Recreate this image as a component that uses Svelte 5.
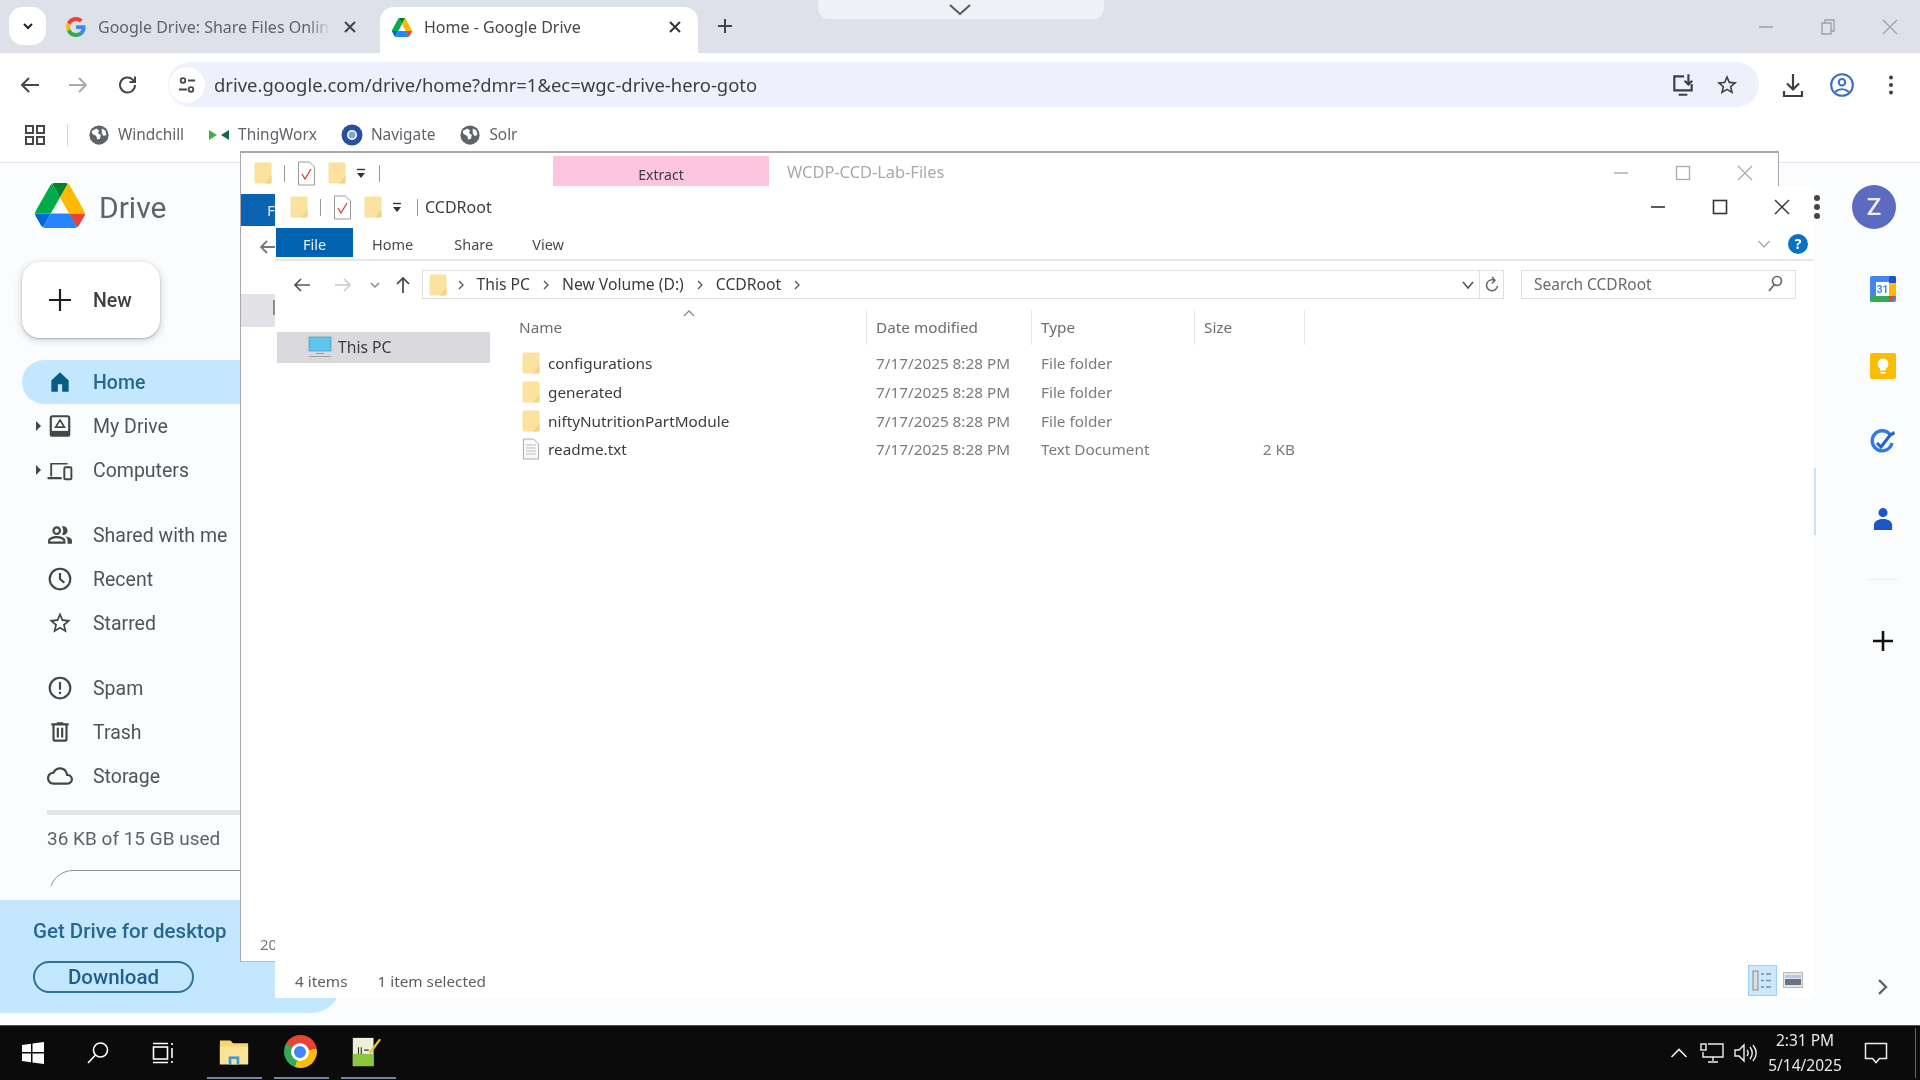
<script>
	const navTop = [
		{ label: 'Home', icon: 'home', active: true },
		{ label: 'My Drive', icon: 'drive', caret: true },
		{ label: 'Computers', icon: 'computers', caret: true }
	];
	const navMid = [
		{ label: 'Shared with me', icon: 'shared' },
		{ label: 'Recent', icon: 'recent' },
		{ label: 'Starred', icon: 'starred' }
	];
	const navLow = [
		{ label: 'Spam', icon: 'spam' },
		{ label: 'Trash', icon: 'trash' },
		{ label: 'Storage', icon: 'storage' }
	];
	const files = [
		{ name: 'configurations', type: 'File folder', size: '', folder: true },
		{ name: 'generated', type: 'File folder', size: '', folder: true },
		{ name: 'niftyNutritionPartModule', type: 'File folder', size: '', folder: true },
		{ name: 'readme.txt', type: 'Text Document', size: '2 KB', folder: false }
	];
	const crumbs = ['This PC', 'New Volume (D:)', 'CCDRoot'];
</script>

{#snippet driveLogo(w, h)}
	<svg width={w} height={h} viewBox="0 0 87.3 78" preserveAspectRatio="none">
		<path d="m6.6 66.85 3.85 6.65c.8 1.4 1.95 2.5 3.3 3.3l13.75-23.8h-27.5c0 1.55.4 3.1 1.2 4.5z" fill="#0066da" />
		<path d="m43.65 25-13.75-23.8c-1.35.8-2.5 1.9-3.3 3.3l-25.4 44a9.06 9.06 0 0 0 -1.2 4.5h27.5z" fill="#00ac47" />
		<path d="m73.55 76.8c1.35-.8 2.5-1.9 3.3-3.3l1.6-2.75 7.65-13.25c.8-1.4 1.2-2.95 1.2-4.5h-27.502l5.852 11.5z" fill="#ea4335" />
		<path d="m43.65 25 13.75-23.8c-1.35-.8-2.9-1.2-4.5-1.2h-18.5c-1.6 0-3.15.45-4.5 1.2z" fill="#00832d" />
		<path d="m59.8 53h-32.3l-13.75 23.8c1.35.8 2.9 1.2 4.5 1.2h50.8c1.6 0 3.15-.45 4.5-1.2z" fill="#2684fc" />
		<path d="m73.4 26.5-12.7-22c-.8-1.4-1.95-2.5-3.3-3.3l-13.75 23.8 16.15 28h27.45c0-1.55-.4-3.1-1.2-4.5z" fill="#ffba00" />
	</svg>
{/snippet}

{#snippet globe()}
	<svg width="22" height="22" viewBox="0 0 24 24">
		<circle cx="12" cy="12" r="10.5" fill="#5f6368" />
		<path d="M4 8l5-3 3 2-1 3 3 2-1 4-3 1-1-4-4-2zM15 5l4 2 1 5-3 1-2-3z" fill="#fff" />
	</svg>
{/snippet}

{#snippet folder(w, h)}
	<svg class="folder" width={w} height={h} viewBox="0 0 18 22">
		<rect x=".5" y=".5" width="17" height="21" rx="1.5" fill="#fce29f" />
		<path d="M11 21.500l6.500-8v6.500a1.500 1.500 0 0 1-1.500 1.500z" fill="#f6d384" />
	</svg>
{/snippet}

{#snippet checkDoc()}
	<svg width="19" height="25" viewBox="0 0 19 25">
		<path d="M1.5 1h11l5 5v18h-16z" fill="#fff" stroke="#9a9a9a" />
		<path d="M5 13l3 5 6-10" fill="none" stroke="#d9473f" stroke-width="1.4" />
	</svg>
{/snippet}

{#snippet qat(dark)}
	<div class="qat">
		{@render folder(18, 22)}
		<span class="qat-sep"></span>
		{@render checkDoc()}
		{@render folder(18, 22)}
		<svg class="qat-drop" width="10" height="12" viewBox="0 0 10 12">
			<path d="M1 2.5h8" stroke="#333" stroke-width="1.4" />
			<path d="M1 6h8l-4 5z" fill="#333" />
		</svg>
		<span class="qat-sep last" class:dark></span>
	</div>
{/snippet}

{#snippet navIcon(name)}
	<svg width="26" height="26" viewBox="0 0 24 24" fill="#444746">
		{#if name === 'home'}
			<path d="M4 21V10.5L12 3l8 7.5V21h-6v-7h-4v7z" fill="#0b5a85" />
		{:else if name === 'drive'}
			<rect x="3.5" y="3" width="17" height="18" rx="1.5" fill="none" stroke="#444746" stroke-width="2" />
			<path d="M3.5 16.5h17v4.5h-17z" />
			<path d="M12 6.5l4 6.5H8z" fill="none" stroke="#444746" stroke-width="1.6" />
		{:else if name === 'computers'}
			<path d="M3 5.5h16V7H4.7v11H3zM.5 18.5h13V20.500H.5z" />
			<rect x="16" y="9.500" width="6.500" height="11" rx="1" fill="none" stroke="#444746" stroke-width="1.800" />
		{:else if name === 'shared'}
			<path d="M16.67 13.13C18.04 14.06 19 15.32 19 17v3h4v-3c0-2.18-3.57-3.47-6.33-3.87zM15 12c2.21 0 4-1.79 4-4s-1.79-4-4-4c-.47 0-.91.1-1.33.24C14.5 5.27 15 6.58 15 8s-.5 2.73-1.33 3.76c.42.14.86.24 1.33.24zM9 12c2.21 0 4-1.79 4-4s-1.79-4-4-4-4 1.79-4 4 1.79 4 4 4zm0-6c1.1 0 2 .9 2 2s-.9 2-2 2-2-.9-2-2 .9-2 2-2zM9 13c-2.67 0-8 1.34-8 4v3h16v-3c0-2.66-5.33-4-8-4zm6 5H3v-.99C3.2 16.29 6.3 15 9 15s5.8 1.29 6 2z" />
		{:else if name === 'recent'}
			<circle cx="12" cy="12" r="9.500" fill="none" stroke="#444746" stroke-width="2" />
			<path d="M12 6.500V12l4 3.500" fill="none" stroke="#444746" stroke-width="2" />
		{:else if name === 'starred'}
			<path d="M22 9.24l-7.19-.62L12 2 9.19 8.63 2 9.24l5.46 4.73L5.82 21 12 17.27 18.18 21l-1.63-7.03L22 9.24zM12 15.4l-3.76 2.27 1-4.28-3.32-2.88 4.38-.38L12 6.1l1.71 4.04 4.38.38-3.32 2.88 1 4.28L12 15.4z" />
		{:else if name === 'spam'}
			<circle cx="12" cy="12" r="9.500" fill="none" stroke="#444746" stroke-width="2" />
			<path d="M11 6.500h2v7h-2zM11 15.500h2v2h-2z" />
		{:else if name === 'trash'}
			<path d="M15 4V3H9v1H4v2h1v13c0 1.100.9 2 2 2h10c1.100 0 2-.9 2-2V6h1V4h-5zm2 15H7V6h10v13zM9 8h2v9H9zm4 0h2v9h-2z" />
		{:else}
			<path d="M19.35 10.040C18.670 6.590 15.640 4 12 4 9.110 4 6.600 5.640 5.350 8.040 2.340 8.360 0 10.910 0 14c0 3.310 2.690 6 6 6h13c2.760 0 5-2.240 5-5 0-2.640-2.050-4.780-4.650-4.960zM19 18H6c-2.210 0-4-1.790-4-4 0-2.050 1.530-3.760 3.560-3.970l1.070-.11.5-.95C8.080 7.140 9.940 6 12 6c2.620 0 4.880 1.860 5.390 4.430l.3 1.500 1.530.11c1.560.1 2.780 1.410 2.780 2.960 0 1.650-1.350 3-3 3z" />
		{/if}
	</svg>
{/snippet}

{#snippet navRow(item)}
	<div class="nav-row" class:active={item.active}>
		{#if item.caret}<span class="caret"></span>{/if}
		<span class="nav-icon">{@render navIcon(item.icon)}</span>
		<span>{item.label}</span>
	</div>
{/snippet}

<div class="screen">
	<div class="tabbar">
		<div class="tab-list">
			<svg width="14" height="14" viewBox="0 0 14 14"><path d="M3 5l4 4 4-4" fill="none" stroke="#1f1f1f" stroke-width="2" /></svg>
		</div>
		<div class="tab">
			<svg width="20" height="20" viewBox="0 0 48 48">
				<path fill="#EA4335" d="M24 9.5c3.54 0 6.71 1.22 9.21 3.6l6.85-6.85C35.9 2.38 30.47 0 24 0 14.62 0 6.51 5.38 2.56 13.22l7.98 6.19C12.43 13.72 17.74 9.5 24 9.5z" />
				<path fill="#4285F4" d="M46.98 24.55c0-1.57-.15-3.09-.38-4.55H24v9.02h12.94c-.58 2.96-2.26 5.48-4.78 7.18l7.73 6c4.51-4.18 7.09-10.36 7.09-17.65z" />
				<path fill="#FBBC05" d="M10.53 28.59c-.48-1.45-.76-2.99-.76-4.59s.27-3.14.76-4.59l-7.98-6.19C.92 16.46 0 20.12 0 24c0 3.88.92 7.54 2.56 10.78l7.97-6.19z" />
				<path fill="#34A853" d="M24 48c6.48 0 11.93-2.13 15.89-5.81l-7.73-6c-2.15 1.45-4.92 2.3-8.16 2.3-6.26 0-11.57-4.22-13.47-9.91l-7.98 6.19C6.51 42.62 14.62 48 24 48z" />
			</svg>
			<span class="tab-title">Google Drive: Share Files Online</span>
			<svg class="tab-x" width="14" height="14" viewBox="0 0 14 14"><path d="M2 2l10 10M12 2L2 12" stroke="#444" stroke-width="2" /></svg>
		</div>
		<div class="tab current">
			{@render driveLogo(20, 19)}
			<span class="tab-title">Home - Google Drive</span>
			<svg class="tab-x" width="14" height="14" viewBox="0 0 14 14"><path d="M2 2l10 10M12 2L2 12" stroke="#333" stroke-width="2" /></svg>
		</div>
		<svg class="new-tab" width="18" height="18" viewBox="0 0 18 18"><path d="M9 2v14M2 9h14" stroke="#444" stroke-width="2" /></svg>
		<div class="win-btns faint">
			<svg width="16" height="16" viewBox="0 0 16 16"><path d="M1 8h14" stroke="#9aa0a6" stroke-width="1.500" /></svg>
			<svg width="16" height="16" viewBox="0 0 16 16"><path d="M2 4h9v11H2zM5 4V1h9v11h-3" fill="none" stroke="#9aa0a6" stroke-width="1.300" /></svg>
			<svg width="16" height="16" viewBox="0 0 16 16"><path d="M1 1l14 14M15 1L1 15" stroke="#9aa0a6" stroke-width="1.300" /></svg>
		</div>
	</div>

	<div class="toolbar">
		<svg class="tool back-ic" width="24" height="24" viewBox="0 0 24 24"><path d="M21 12H4M11 5l-7 7 7 7" fill="none" stroke="#444746" stroke-width="2" /></svg>
		<svg class="tool fwd-ic" width="24" height="24" viewBox="0 0 24 24"><path d="M3 12h17M13 5l7 7-7 7" fill="none" stroke="#a8abb0" stroke-width="2" /></svg>
		<svg class="tool reload-ic" width="24" height="24" viewBox="0 0 24 24"><path d="M19 12a7.500 7.500 0 1 1-2.300-5.400L19 9M19 3.500V9h-5.500" fill="none" stroke="#444746" stroke-width="2" /></svg>
		<div class="omnibox">
			<span class="site-info">
				<svg width="20" height="20" viewBox="0 0 20 20" fill="none" stroke="#444746" stroke-width="1.800">
					<circle cx="6" cy="5.500" r="2.300" /><path d="M11 5.500h7M2 14.500h8" /><circle cx="14" cy="14.500" r="2.300" />
				</svg>
			</span>
			<span class="url">drive.google.com/drive/home?dmr=1&amp;ec=wgc-drive-hero-goto</span>
			<svg class="omni-install" width="26" height="26" viewBox="0 0 24 24" fill="none" stroke="#3c4043" stroke-width="2">
				<path d="M13 4H4v13h16v-6M8 21h8" /><path d="M17 2v9M13.500 8l3.500 3.500L20.500 8" />
			</svg>
			<svg class="omni-star" width="24" height="24" viewBox="0 0 24 24" fill="#3c4043">
				<path d="M22 9.240l-7.190-.62L12 2 9.190 8.630 2 9.240l5.460 4.730L5.820 21 12 17.270 18.180 21l-1.630-7.030L22 9.240zM12 15.400l-3.760 2.270 1-4.280-3.320-2.880 4.380-.38L12 6.100l1.710 4.040 4.380.38-3.320 2.880 1 4.280L12 15.400z" />
			</svg>
		</div>
		<svg class="tool dl-ic" width="24" height="26" viewBox="0 0 24 26" fill="none" stroke="#3c4043" stroke-width="2.200"><path d="M12 2v15M6 11.500l6 6 6-6M3 19v5h18v-5" /></svg>
		<svg class="tool prof-ic" width="26" height="26" viewBox="0 0 24 24" fill="none" stroke="#3a6fc4" stroke-width="1.900"><circle cx="12" cy="12" r="10" /><circle cx="12" cy="9.500" r="3" /><path d="M5.500 18.500c4-3.500 9-3.500 13 0" /></svg>
		<svg class="tool dots-ic" width="24" height="24" viewBox="0 0 24 24" fill="#3c4043"><circle cx="12" cy="4.500" r="2" /><circle cx="12" cy="12" r="2" /><circle cx="12" cy="19.500" r="2" /></svg>
	</div>

	<div class="bookmarks">
		<svg class="apps" width="20" height="20" viewBox="0 0 20 20" fill="none" stroke="#444746" stroke-width="2"><rect x="1" y="1" width="7" height="7" /><rect x="12" y="1" width="7" height="7" /><rect x="1" y="12" width="7" height="7" /><rect x="12" y="12" width="7" height="7" /></svg>
		<span class="bm-sep"></span>
		<span class="bm">{@render globe()}<span>Windchill</span></span>
		<span class="bm">
			<svg width="22" height="14" viewBox="0 0 22 14"><path d="M1 2l8 5-8 5z" fill="#3fae49" /><path d="M21 2l-8 5 8 5z" fill="#17654d" /></svg>
			<span>ThingWorx</span>
		</span>
		<span class="bm">
			<svg width="22" height="22" viewBox="0 0 22 22"><circle cx="11" cy="11" r="10.500" fill="#2a4f9e" /><circle cx="11" cy="11" r="5" fill="#fff" /><circle cx="11" cy="11" r="3.500" fill="#7ba7dc" /></svg>
			<span>Navigate</span>
		</span>
		<span class="bm">{@render globe()}<span>Solr</span></span>
	</div>

	<div class="drive">
		<aside class="sidebar">
			<div class="logo">
				{@render driveLogo(50, 45)}
				<span>Drive</span>
			</div>
			<div class="new-btn">
				<svg width="24" height="24" viewBox="0 0 24 24"><path d="M12 1v22M1 12h22" stroke="#1f1f1f" stroke-width="2.200" /></svg>
				<span>New</span>
			</div>
			<nav class="nav first">{#each navTop as item}{@render navRow(item)}{/each}</nav>
			<nav class="nav">{#each navMid as item}{@render navRow(item)}{/each}</nav>
			<nav class="nav">{#each navLow as item}{@render navRow(item)}{/each}</nav>
			<div class="quota-bar"></div>
			<div class="quota">36 KB of 15 GB used</div>
			<div class="more"><div class="more-btn"></div></div>
			<div class="promo">
				<div class="promo-title">Get Drive for desktop</div>
				<div class="promo-btn">Download</div>
			</div>
		</aside>

		<div class="drive-right">
			<div class="drive-head">
				<svg width="10" height="26" viewBox="0 0 10 26" fill="#444746"><circle cx="5" cy="4" r="3" /><circle cx="5" cy="13" r="3" /><circle cx="5" cy="22" r="3" /></svg>
				<div class="avatar">Z</div>
			</div>
			<div class="rail">
				<svg class="slot" width="28" height="28" viewBox="0 0 28 28">
					<rect x="1" y="1" width="26" height="26" rx="2" fill="#4285f4" />
					<path d="M20 1h5a2 2 0 0 1 2 2v5h-7z" fill="#1a56c4" />
					<rect x="20" y="8" width="7" height="13" fill="#fbbc04" />
					<path d="M1 21h19v6H3a2 2 0 0 1-2-2z" fill="#34a853" />
					<path d="M20 21h7l-7 6z" fill="#ea4335" />
					<rect x="7" y="7" width="13" height="14" fill="#fff" />
					<text x="13.500" y="18" class="cal-num">31</text>
				</svg>
				<div class="slot keep">
					<svg width="28" height="28" viewBox="0 0 28 28">
						<rect x="1" y="1" width="26" height="26" rx="2" fill="#fbbc04" />
						<path d="M14 6.500a5.500 5.500 0 0 0-3 10v2h6v-2a5.500 5.500 0 0 0-3-10zM11.500 20h5v1.500h-5z" fill="#fff" />
					</svg>
				</div>
				<svg class="slot" width="28" height="28" viewBox="0 0 28 28" fill="none">
					<path d="M21 6.500A10 10 0 1 0 23 15" stroke="#2f7be6" stroke-width="3.400" />
					<path d="M8 15l4 4 10-13" stroke="#1f62d0" stroke-width="3" />
					<path d="M20 6l5-3 1 3-3 2z" fill="#1f62d0" />
				</svg>
				<svg class="slot" width="20" height="24" viewBox="0 0 22 26" fill="#1a56c4">
					<circle cx="11" cy="6" r="5" /><path d="M1 25v-5c0-4 4-7 10-7s10 3 10 7v5z" />
				</svg>
				<div class="rail-sep"></div>
				<svg class="rail-add" width="22" height="22" viewBox="0 0 22 22"><path d="M11 1v20M1 11h20" stroke="#111" stroke-width="2.600" /></svg>
				<svg class="rail-more" width="14" height="20" viewBox="0 0 14 20"><path d="M3 3l7 7-7 7" fill="none" stroke="#5f6368" stroke-width="2.400" /></svg>
			</div>
		</div>
	</div>

	<div class="taskbar">
		<span class="task-cell wide">
			<svg width="24" height="24" viewBox="0 0 24 24" fill="#fff"><path d="M1 4l9-1.300V11H1zM11.500 2.500L23 1v10H11.500zM1 12.500h9v8.800l-9-1.300zM11.500 12.500H23V23l-11.500-1.500z" /></svg>
		</span>
		<span class="task-cell wide">
			<svg width="24" height="24" viewBox="0 0 24 24" fill="none" stroke="#fff" stroke-width="1.600"><circle cx="14.500" cy="9" r="7" /><path d="M9.500 14L2 22" /></svg>
		</span>
		<span class="task-cell wide">
			<svg width="24" height="24" viewBox="0 0 24 24" fill="none" stroke="#fff" stroke-width="1.600"><rect x="1.500" y="6" width="14" height="12" /><path d="M1 2.500h15M1 21.500h15M20 2v2M20 7v10M20 20v2" /></svg>
		</span>
		<span class="task-cell app first-app">
			<svg width="30" height="26" viewBox="0 0 34 28"><path d="M1 1h12l3 3h17v24H1z" fill="#f7d774" /><path d="M1 8h32v20H1z" fill="#fbe39a" /><path d="M11 19h12v9H11z" fill="#3f9bd8" /><path d="M14 22h6v6h-6z" fill="#fbe39a" /></svg>
		</span>
		<span class="task-cell app">
			<span class="chrome"><span class="chrome-core"></span></span>
		</span>
		<span class="task-cell app">
			<svg class="npp" width="32" height="32" viewBox="0 0 34 34">
				<path d="M3 2h22v30H3z" fill="#eef0d8" />
				<path d="M3 19h22v13H3z" fill="#8cc63f" />
				<path d="M9 12v7M12 12v7M15 15h5" stroke="#333" stroke-width="1.200" />
				<path d="M20 17L31 3l2 1-11 15z" fill="#e9c23b" />
			</svg>
		</span>
		<div class="tray">
			<svg class="t-chev" width="18" height="12" viewBox="0 0 18 12"><path d="M1.500 10L9 2.500 16.500 10" fill="none" stroke="#eee" stroke-width="1.600" /></svg>
			<svg class="t-net" width="24" height="22" viewBox="0 0 24 22" fill="none" stroke="#eee" stroke-width="1.400"><path d="M8 2h15v13H3V10M13 15v4M8 20h10" /><rect x="1" y="2" width="5" height="6" /></svg>
			<svg class="t-snd" width="24" height="22" viewBox="0 0 24 22" fill="none" stroke="#eee" stroke-width="1.400"><path d="M2 8h4l5-5v16l-5-5H2zM14 8c1.500 2 1.500 4 0 6M17 5c3 4 3 8 0 12M20 3c4 5 4 11 0 16" /></svg>
			<div class="clock"><span>2:31 PM</span><span>5/14/2025</span></div>
			<svg class="t-note" width="24" height="22" viewBox="0 0 24 22"><path d="M1.500 1.500h21v15h-7l-3.500 4-3.500-4h-7z" fill="none" stroke="#eee" stroke-width="1.500" /></svg>
			<span class="t-end"></span>
		</div>
	</div>

	<div class="top-pill">
		<svg width="24" height="14" viewBox="0 0 24 14"><path d="M2 2l10 9 10-9" fill="none" stroke="#55585c" stroke-width="2" /></svg>
	</div>

	<!-- window behind -->
	<div class="win back-win">
		<div class="titlebar">
			{@render qat(false)}
			<div class="extract">Extract</div>
			<span class="back-title">WCDP-CCD-Lab-Files</span>
			<div class="controls faded">
				<svg width="16" height="16" viewBox="0 0 16 16"><path d="M1 8h14" stroke="#aaa" stroke-width="1.400" /></svg>
				<svg width="16" height="16" viewBox="0 0 16 16"><rect x="1.500" y="1.500" width="13" height="13" fill="none" stroke="#aaa" stroke-width="1.300" /></svg>
				<svg width="16" height="16" viewBox="0 0 16 16"><path d="M1 1l14 14M15 1L1 15" stroke="#aaa" stroke-width="1.300" /></svg>
			</div>
		</div>
		<div class="f-tab">F</div>
		<svg class="back-arrow" width="20" height="20" viewBox="0 0 20 20"><path d="M18 10H3M9 4l-6 6 6 6" fill="none" stroke="#777" stroke-width="1.800" /></svg>
		<div class="back-pane"></div>
		<div class="back-year">20</div>
	</div>

	<!-- window in front -->
	<div class="win front-win">
		<div class="titlebar front-title">
			{@render qat(true)}
			<span class="win-name">CCDRoot</span>
			<div class="controls">
				<svg width="16" height="16" viewBox="0 0 16 16"><path d="M1 8h14" stroke="#333" stroke-width="1.600" /></svg>
				<svg width="16" height="16" viewBox="0 0 16 16"><rect x="1.500" y="1.500" width="13" height="13" fill="none" stroke="#333" stroke-width="1.600" /></svg>
				<svg width="16" height="16" viewBox="0 0 16 16"><path d="M1 1l14 14M15 1L1 15" stroke="#333" stroke-width="1.400" /></svg>
			</div>
		</div>
		<div class="ribbon">
			<span class="rb file">File</span>
			<span class="rb home">Home</span>
			<span class="rb share">Share</span>
			<span class="rb view">View</span>
			<svg class="rb-chev" width="14" height="10" viewBox="0 0 14 10"><path d="M1.500 2L7 8l5.500-6" fill="none" stroke="#aaa" stroke-width="1.400" /></svg>
			<span class="help">?</span>
		</div>
		<div class="navbar">
			<svg class="nb back-b" width="20" height="20" viewBox="0 0 20 20"><path d="M18 10H3M9 4l-6 6 6 6" fill="none" stroke="#555" stroke-width="1.700" /></svg>
			<svg class="nb fwd-b" width="20" height="20" viewBox="0 0 20 20"><path d="M2 10h15M11 4l6 6-6 6" fill="none" stroke="#ccc" stroke-width="1.700" /></svg>
			<svg class="nb down-b" width="16" height="20" viewBox="0 0 16 20"><path d="M4 8l4 4 4-4" fill="none" stroke="#888" stroke-width="1.500" /></svg>
			<svg class="nb up-b" width="20" height="20" viewBox="0 0 20 20"><path d="M10 18V3M4 9l6-6 6 6" fill="none" stroke="#444" stroke-width="1.700" /></svg>
			<div class="address">
				{@render folder(18, 24)}
				{#each crumbs as crumb}
					<svg class="chev" width="10" height="12" viewBox="0 0 10 12"><path d="M3 2l4 4-4 4" fill="none" stroke="#555" stroke-width="1.300" /></svg>
					<span class="crumb">{crumb}</span>
				{/each}
				<svg class="chev" width="10" height="12" viewBox="0 0 10 12"><path d="M3 2l4 4-4 4" fill="none" stroke="#555" stroke-width="1.300" /></svg>
				<svg class="addr-drop" width="14" height="10" viewBox="0 0 14 10"><path d="M2 2l5 6 5-6" fill="none" stroke="#555" stroke-width="1.600" /></svg>
				<span class="addr-sep"></span>
				<svg class="addr-ref" width="16" height="18" viewBox="0 0 16 18"><path d="M13.500 10a5.500 5.500 0 1 1-3-5.700M8 1l3 3.300L8 7.500" fill="none" stroke="#666" stroke-width="1.500" /></svg>
			</div>
			<div class="search">
				<span>Search CCDRoot</span>
				<svg width="16" height="18" viewBox="0 0 16 18" fill="none" stroke="#666" stroke-width="1.700"><circle cx="10" cy="6" r="4.500" /><path d="M7 10l-5 6" /></svg>
			</div>
		</div>
		<div class="body">
			<div class="pane">
				<div class="pane-row">
					<svg width="24" height="24" viewBox="0 0 24 24"><rect x="1" y="2" width="22" height="14" fill="#5fc4ee" stroke="#3c8fb5" stroke-width=".6" /><path d="M8 18h8v1H8z" fill="#79a7c4" /><path d="M1 21h22v1H1z" fill="#9aa5ad" /></svg>
					<span>This PC</span>
				</div>
			</div>
			<div class="list">
				<div class="head grid">
					<span class="hcell name-head">Name<svg class="sort" width="12" height="8" viewBox="0 0 12 8"><path d="M1 7l5-5 5 5" fill="none" stroke="#888" stroke-width="1.300" /></svg></span>
					<span class="hcell">Date modified</span>
					<span class="hcell">Type</span>
					<span class="hcell">Size</span>
				</div>
				{#each files as file}
					<div class="file grid">
						<span class="fname">
							{#if file.folder}
								{@render folder(18, 22)}
							{:else}
								<svg width="18" height="22" viewBox="0 0 18 22"><path d="M1.500 1h10l5 5v15h-15z" fill="#fafafa" stroke="#aaa" /><path d="M4 7h10M4 10h10M4 13h10M4 16h10" stroke="#bbb" /></svg>
							{/if}
							<span>{file.name}</span>
						</span>
						<span class="fcell">7/17/2025 8:28 PM</span>
						<span class="fcell">{file.type}</span>
						<span class="fcell size">{file.size}</span>
					</div>
				{/each}
			</div>
		</div>
		<div class="status">
			<span>4 items</span>
			<span class="selected">1 item selected</span>
			<span class="view-btn">
				<svg width="23" height="23" viewBox="0 0 23 23" fill="none" stroke="#8a8a8a"><rect x="2" y="2" width="5" height="19" fill="#ddd" /><path d="M10 5h3M15 5h5M10 11.500h3M15 11.500h5M10 18h3M15 18h5" stroke-width="1.500" /></svg>
			</span>
			<svg class="tile-btn" width="20" height="16" viewBox="0 0 20 16"><rect x=".5" y=".5" width="19" height="15" fill="#e5e5e8" stroke="#bbb" /><path d="M2 3h16v3H2z" fill="#b9c6ea" /><path d="M2 7h16v6H2z" fill="#66747f" /></svg>
		</div>
		<span class="scroll-mark"></span>
	</div>
</div>

<style>
	:global(body) {
		margin: 0;
		background: #fff;
	}

	.screen {
		position: relative;
		width: 1920px;
		height: 1080px;
		overflow: hidden;
		display: flex;
		flex-direction: column;
		font-family: 'Noto Sans', Roboto, sans-serif;
		color: #444746;
		filter: blur(0.5px);
	}

	/* browser */
	.tabbar {
		height: 53px;
		background: #dee1ea;
		display: flex;
		align-items: flex-end;
		flex-shrink: 0;
	}

	.tab-list {
		width: 37px;
		height: 38px;
		margin: 0 5px 8px 9px;
		background: #fff;
		border-radius: 14px;
		display: flex;
		align-items: center;
		justify-content: center;
	}

	.tab {
		width: 318px;
		height: 46px;
		padding: 0 12px 6px 15px;
		box-sizing: border-box;
		display: flex;
		align-items: center;
		gap: 12px;
		border-radius: 14px 14px 0 0;
		font-size: 16px;
		color: #5f6368;
	}

	.tab.current {
		background: #fff;
		color: #444746;
		margin-left: 11px;
		padding: 0 16px 6px 12px;
	}

	.tab-title {
		flex: 1;
		white-space: nowrap;
		overflow: hidden;
		mask-image: linear-gradient(90deg, #000 90%, transparent);
	}

	.new-tab {
		margin: 0 0 18px 18px;
	}

	.win-btns {
		margin: 0 22px 18px auto;
		display: flex;
		gap: 46px;
	}

	.toolbar {
		height: 57px;
		box-sizing: border-box;
		padding-top: 9px;
		padding-bottom: 3px;
		background: #fff;
		display: flex;
		align-items: center;
		flex-shrink: 0;
	}

	.back-ic {
		margin-left: 18px;
	}

	.fwd-ic {
		margin-left: 24px;
	}

	.reload-ic {
		margin-left: 26px;
	}

	.omnibox {
		width: 1591px;
		height: 45px;
		margin-left: 28px;
		background: #eef1fb;
		border-radius: 23px;
		display: flex;
		align-items: center;
	}

	.site-info {
		width: 36px;
		height: 36px;
		margin-left: 1px;
		border-radius: 50%;
		background: #fff;
		display: flex;
		align-items: center;
		justify-content: center;
	}

	.url {
		margin-left: 9px;
		font-size: 18.450px;
		color: #3c4043;
		white-space: nowrap;
	}

	.omni-install {
		margin-left: auto;
	}

	.omni-star {
		margin: 0 20px 0 19px;
	}

	.dl-ic {
		margin-left: 22px;
	}

	.prof-ic {
		margin-left: 24px;
	}

	.dots-ic {
		margin-left: 24px;
	}

	.bookmarks {
		height: 53px;
		box-sizing: border-box;
		padding: 0 0 3px 25px;
		background: #fff;
		border-bottom: 1px solid #e6e6e8;
		display: flex;
		align-items: center;
		font-size: 15.400px;
		color: #5f6368;
		flex-shrink: 0;
	}

	.bm-sep {
		width: 1px;
		height: 22px;
		margin: 0 20px 0 22px;
		background: #d5d7db;
	}

	.bm {
		display: flex;
		align-items: center;
		gap: 8px;
		margin-right: 24px;
	}

	/* drive */
	.drive {
		flex: 1;
		min-height: 0;
		display: flex;
		background: #fbfcfe;
		font-family: Roboto, 'Noto Sans', sans-serif;
	}

	.sidebar {
		width: 340px;
		flex-shrink: 0;
		display: flex;
		flex-direction: column;
	}

	.logo {
		height: 45px;
		margin: 20px 0 0 35px;
		display: flex;
		align-items: center;
		gap: 14px;
		font-size: 30px;
		color: #5f6368;
	}

	.logo span {
		padding-top: 4px;
	}

	.new-btn {
		width: 138px;
		height: 76px;
		margin: 34px 0 0 22px;
		box-sizing: border-box;
		padding-left: 26px;
		background: #fff;
		border-radius: 18px;
		box-shadow: 0 1px 2px rgba(60, 64, 67, 0.3), 0 2px 6px 2px rgba(60, 64, 67, 0.15);
		display: flex;
		align-items: center;
		gap: 21px;
		font-size: 19.500px;
		font-weight: 500;
		color: #3c4043;
	}

	.nav {
		margin-top: 21px;
	}

	.nav.first {
		margin-top: 22px;
	}

	.nav-row {
		position: relative;
		height: 44px;
		margin-left: 22px;
		padding-left: 71px;
		display: flex;
		align-items: center;
		font-size: 19.500px;
		color: #50545a;
		white-space: nowrap;
	}

	.nav-row.active {
		background: #c2e7ff;
		border-radius: 22px 0 0 22px;
		color: #27688f;
		font-weight: 500;
	}

	.nav-icon {
		position: absolute;
		left: 25px;
		top: 9px;
		display: flex;
	}

	.caret {
		position: absolute;
		left: 14px;
		top: 17px;
		border-left: 5px solid #444746;
		border-top: 5px solid transparent;
		border-bottom: 5px solid transparent;
	}

	.quota-bar {
		height: 5px;
		margin: 12px 0 0 47px;
		background: #e3e4e8;
	}

	.quota {
		margin: 12px 0 0 47px;
		line-height: 24px;
		font-size: 19px;
		color: #5f6368;
	}

	.more {
		height: 16px;
		margin: 19px 0 14px 49px;
		overflow: hidden;
	}

	.more-btn {
		height: 48px;
		border: 1.500px solid #8f9296;
		border-radius: 24px;
	}

	.promo {
		height: 113px;
		box-sizing: border-box;
		padding: 18px 0 0 33px;
		background: #c2e7ff;
		border-radius: 0 0 28px 0;
	}

	.promo-title {
		line-height: 26px;
		font-size: 20.500px;
		font-weight: 500;
		color: #27688f;
	}

	.promo-btn {
		width: 161px;
		height: 32px;
		margin-top: 17px;
		box-sizing: border-box;
		border: 2px solid #2f7197;
		border-radius: 17px;
		text-align: center;
		line-height: 28px;
		font-size: 20.500px;
		font-weight: 500;
		color: #1f5f8d;
	}

	.drive-right {
		flex: 1;
		display: flex;
		flex-direction: column;
		min-width: 0;
	}

	.drive-head {
		height: 66px;
		padding: 22px 24px 0 0;
		display: flex;
		justify-content: flex-end;
		align-items: flex-start;
		gap: 30px;
	}

	.drive-head svg {
		margin-top: 9px;
	}

	.avatar {
		width: 44px;
		height: 44px;
		border-radius: 50%;
		background: #5c6bc0;
		color: #eef;
		font-size: 24px;
		font-weight: 500;
		text-align: center;
		line-height: 44px;
	}

	.rail {
		flex: 1;
		width: 74px;
		align-self: flex-end;
		padding-top: 18px;
		padding-bottom: 28px;
		box-sizing: border-box;
		display: flex;
		flex-direction: column;
		align-items: center;
	}

	.slot {
		height: 40px;
		margin-bottom: 36.500px;
		display: flex;
		align-items: center;
	}

	.cal-num {
		font-size: 10px;
		font-weight: 700;
		text-anchor: middle;
		fill: #4285f4;
	}

	.rail-sep {
		width: 30px;
		height: 1px;
		margin-top: 4px;
		background: #ebedf0;
	}

	.rail-add {
		margin-top: 50px;
	}

	.rail-more {
		margin-top: auto;
	}

	/* taskbar */
	.taskbar {
		height: 55px;
		flex-shrink: 0;
		background: #0b0b0c;
		border-top: 1px solid #555;
		box-sizing: border-box;
		display: flex;
		align-items: stretch;
	}

	.task-cell {
		display: flex;
		align-items: center;
		justify-content: center;
	}

	.task-cell.wide {
		width: 65.500px;
	}

	.task-cell.app {
		width: 55px;
		margin-right: 12px;
		box-sizing: border-box;
		border-bottom: 2px solid #6d88a8;
		margin-bottom: 1px;
	}

	.task-cell.first-app {
		margin-left: 10px;
	}

	.npp {
		margin-left: -4px;
	}

	.chrome {
		width: 33px;
		height: 33px;
		margin-left: -2px;
		border-radius: 50%;
		background: conic-gradient(from -60deg, #ea4335 0 140deg, #fbbc04 140deg 260deg, #34a853 260deg 360deg);
		display: flex;
		align-items: center;
		justify-content: center;
	}

	.chrome-core {
		width: 12px;
		height: 12px;
		border-radius: 50%;
		background: #4285f4;
		border: 3px solid #fff;
	}

	.tray {
		margin-left: auto;
		display: flex;
		align-items: center;
		color: #e8e8e8;
	}

	.t-chev {
		margin-right: 12px;
	}

	.t-net {
		margin-right: 9px;
	}

	.t-snd {
		margin-right: 8px;
	}

	.clock {
		width: 80px;
		margin-right: 19px;
		display: flex;
		flex-direction: column;
		align-items: center;
		gap: 4px;
		font-size: 15.500px;
		line-height: 21px;
		white-space: nowrap;
	}

	.t-note {
		margin-right: 27px;
	}

	.t-end {
		width: 1px;
		height: 50px;
		margin-right: 4px;
		background: #666;
	}

	.top-pill {
		position: absolute;
		top: 0;
		left: 818px;
		width: 286px;
		height: 19px;
		padding-right: 3px;
		box-sizing: border-box;
		background: #f0f0f7;
		border-radius: 0 0 11px 11px;
		display: flex;
		justify-content: center;
		align-items: center;
	}

	/* explorer windows */
	.win {
		position: absolute;
		background: #fff;
		font-family: 'Noto Sans', 'Open Sans', sans-serif;
		font-size: 15.300px;
		color: #3c3c3c;
		display: flex;
		flex-direction: column;
	}

	.back-win {
		left: 240px;
		top: 151px;
		width: 1539px;
		height: 811px;
		border: 1px solid #a9a9ad;
		border-top-width: 2px;
		border-bottom: 1px solid #bbb;
		box-sizing: border-box;
	}

	.front-win {
		left: 275px;
		top: 186px;
		width: 1538px;
		height: 812px;
	}

	.titlebar {
		height: 40px;
		flex-shrink: 0;
		display: flex;
		align-items: center;
		padding-left: 13px;
	}

	.front-title {
		height: 42px;
		padding-left: 15px;
	}

	.qat {
		display: flex;
		align-items: center;
		gap: 12px;
	}

	.qat-sep {
		width: 1px;
		height: 17px;
		background: #9a9a9a;
	}

	.qat-sep.last {
		margin-left: 1px;
	}

	.qat-sep.dark {
		margin-left: 3px;
	}

	.qat-drop {
		margin-left: -2px;
	}

	.extract {
		width: 216px;
		height: 30px;
		align-self: flex-start;
		margin: 3px 0 0 173px;
		background: #fdc5e0;
		text-align: center;
		line-height: 37px;
		font-size: 14px;
	}

	.back-title {
		margin: 0 0 3px 18px;
		font-size: 16.400px;
		color: #a9a9a9;
	}

	.win-name {
		margin-left: 7px;
		font-size: 16px;
	}

	.controls {
		margin-left: auto;
		display: flex;
		gap: 46px;
		padding-right: 25px;
	}

	.front-title .controls {
		padding-right: 23px;
	}

	.f-tab {
		width: 34px;
		height: 32px;
		margin-top: 1px;
		box-sizing: border-box;
		padding-left: 26px;
		background: #0a63b1;
		color: #dfe9f5;
		line-height: 32px;
	}

	.back-arrow {
		margin: 11px 0 0 17px;
		flex-shrink: 0;
	}

	.back-pane {
		width: 34px;
		height: 33px;
		margin-top: 37px;
		background: linear-gradient(#8a8a8a, #8a8a8a) right 6px / 2px 15px no-repeat, #e2e1e5;
	}

	.back-year {
		margin: auto 0 7px 19px;
		width: 15px;
		overflow: hidden;
		color: #777;
		font-size: 15px;
	}

	.ribbon {
		position: relative;
		height: 33px;
		box-sizing: border-box;
		flex-shrink: 0;
		border-bottom: 2px solid #e7e7e7;
		display: flex;
		font-size: 14.500px;
	}

	.rb {
		line-height: 32px;
		text-align: center;
		color: #4a4a4a;
	}

	.rb.file {
		width: 77px;
		margin-left: 1px;
		background: #0063b1;
		color: #e8f1fa;
	}

	.rb.home {
		margin-left: 19px;
	}

	.rb.share {
		margin-left: 41px;
	}

	.rb.view {
		margin-left: 39px;
	}

	.rb-chev {
		margin: 11px 0 0 auto;
	}

	.help {
		width: 20px;
		height: 20px;
		margin: 6px 5px 0 17px;
		border-radius: 50%;
		background: #0a72c4;
		color: #fff;
		text-align: center;
		font-size: 14px;
		font-weight: 700;
		line-height: 20px;
	}

	.navbar {
		height: 47px;
		box-sizing: border-box;
		padding-top: 9px;
		flex-shrink: 0;
		display: flex;
		align-items: flex-start;
	}

	.nb {
		margin-top: 5px;
	}

	.back-b {
		margin-left: 17px;
	}

	.fwd-b {
		margin-left: 21px;
	}

	.down-b {
		margin-left: 14px;
	}

	.up-b {
		margin-left: 10px;
	}

	.address {
		width: 1082px;
		height: 29px;
		margin-left: 9px;
		box-sizing: border-box;
		border: 1px solid #dedede;
		padding-left: 6px;
		display: flex;
		align-items: center;
		gap: 11px;
	}

	.address .folder {
		margin-right: -2.500px;
	}

	.crumb {
		white-space: nowrap;
		font-size: 15.700px;
		margin-top: -2px;
	}

	.addr-drop {
		margin-left: auto;
	}

	.addr-sep {
		width: 1px;
		height: 27px;
		margin: 0 -7px 0 -7px;
		background: #dedede;
	}

	.addr-ref {
		margin-right: 3px;
	}

	.search {
		width: 275px;
		height: 29px;
		margin-left: 17px;
		box-sizing: border-box;
		border: 1px solid #dedede;
		padding: 0 12px 2px;
		display: flex;
		align-items: center;
		justify-content: space-between;
		color: #6a6a6a;
		font-size: 15.500px;
	}

	.body {
		flex: 1;
		display: flex;
		min-height: 0;
	}

	.pane {
		width: 215px;
		flex-shrink: 0;
		padding: 24px 0 0 2px;
		box-sizing: border-box;
	}

	.pane-row {
		width: 213px;
		height: 31px;
		box-sizing: border-box;
		padding-left: 31px;
		padding-bottom: 2px;
		background: #dad9dd;
		display: flex;
		align-items: center;
		gap: 6px;
		font-size: 15.700px;
	}

	.list {
		margin-left: 20px;
		padding-top: 2px;
	}

	.grid {
		display: grid;
		grid-template-columns: 357px 165px 163px 110px;
	}

	.head {
		height: 35px;
		margin-bottom: 4px;
	}

	.hcell {
		position: relative;
		padding-left: 9px;
		border-right: 1px solid #e8e8e8;
		line-height: 34px;
		color: #6d6d6d;
	}

	.sort {
		position: absolute;
		left: 173px;
		top: -1px;
	}

	.file {
		height: 28.700px;
		align-items: center;
	}

	.fname {
		padding-left: 12px;
		display: flex;
		align-items: center;
		gap: 8px;
		color: #3c3c3c;
	}

	.fcell {
		padding-left: 9px;
		color: #7b7b7b;
		white-space: nowrap;
	}

	.fcell.size {
		padding: 0 10px 0 0;
		text-align: right;
	}

	.status {
		height: 34px;
		flex-shrink: 0;
		padding-left: 20px;
		display: flex;
		align-items: center;
		color: #5e5e5e;
	}

	.selected {
		margin-left: 30px;
	}

	.view-btn {
		width: 29px;
		height: 31px;
		margin: -2px 0 0 auto;
		box-sizing: border-box;
		background: #cce8ff;
		border: 1px solid #99d1ff;
		display: flex;
		align-items: center;
		justify-content: center;
	}

	.tile-btn {
		margin: -2px 10px 0 6px;
	}

	.scroll-mark {
		position: absolute;
		right: -3px;
		top: 282px;
		width: 2px;
		height: 67px;
		background: #cfe2f3;
	}
</style>
